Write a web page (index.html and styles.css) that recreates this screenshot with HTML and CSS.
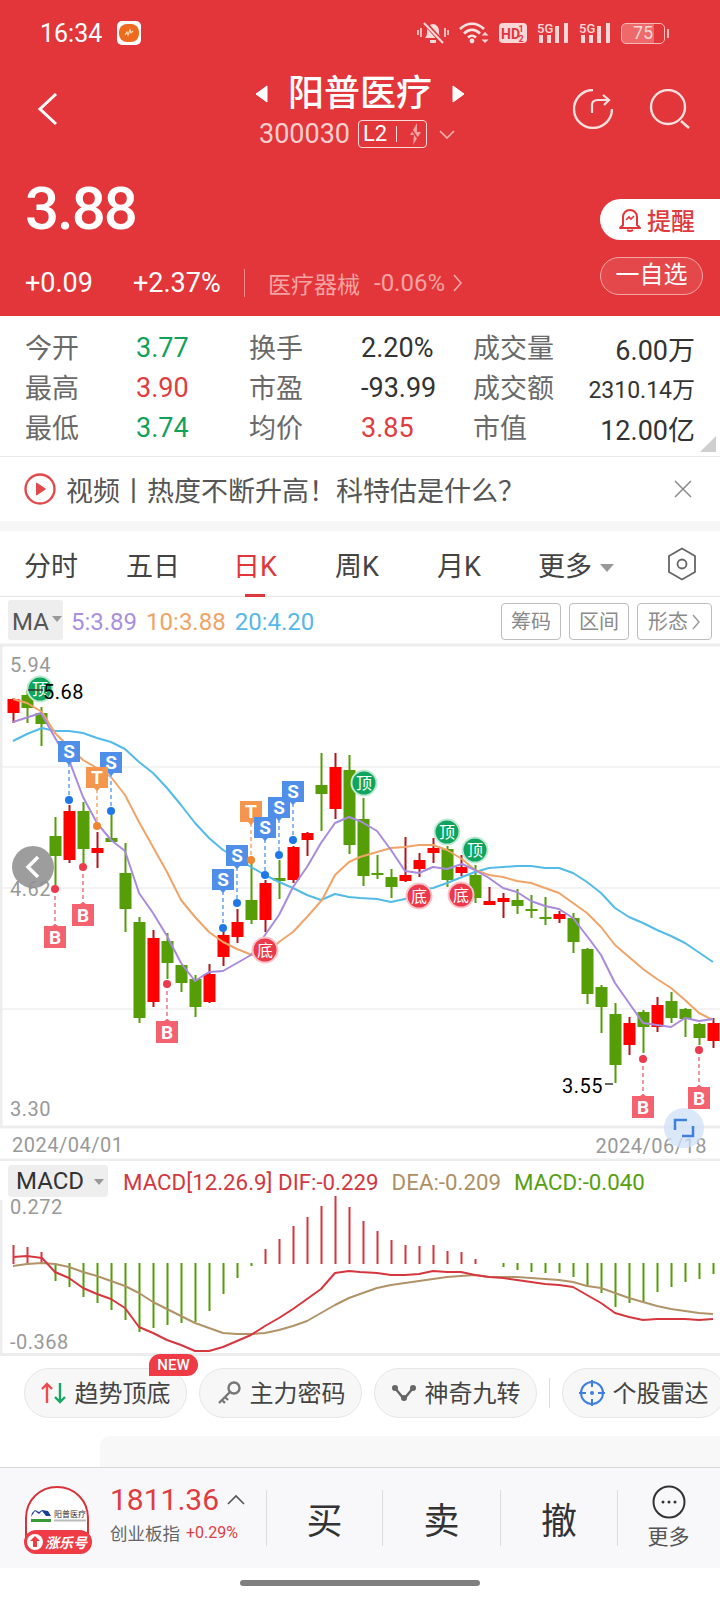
FILE: index.html
```html
<!DOCTYPE html>
<html lang="zh">
<head>
    <meta charset="utf-8">
    <title>阳普医疗</title>
    <link rel="stylesheet" href="styles.css">
</head>
<body>
    <!-- 顶部红色行情区 -->
    <header class="header">
        <div class="status">
            <span class="clock">16:34</span>
            <svg class="app-dot" viewBox="0 0 24 24" width="24" height="24"><rect width="24" height="24" rx="5" fill="#fff"/><rect x="2" y="3" width="20" height="18" rx="8" fill="#EE6A1F"/><path d="M8 14l2-3 1 3 2-5 1 3 2-2" fill="none" stroke="#FFD9B0" stroke-width="1.2"/></svg>
            <div class="status-icons">
                <svg width="32" height="22" viewBox="0 0 32 22"><path d="M8 16c2-2 2-4 2-7 0-4 3-7 6-7s6 3 6 7c0 3 0 5 2 7z" fill="#FBDADA"/><path d="M13 18h6v3h-6z" fill="#FBDADA"/><path d="M8 1l18 20" stroke="#E3363A" stroke-width="4.500"/><path d="M7 1l19 20" stroke="#FBDADA" stroke-width="2"/><path d="M1 8v5M4 6v9M28 6v9M31 8v5" stroke="#FBDADA" stroke-width="1.600"/></svg>
                <svg width="30" height="22" viewBox="0 0 30 22"><path d="M1 7c7-7 17-7 24 0M5 11.500c5-5 11-5 16 0M9 15.500c3-2.600 5-2.600 8 0" fill="none" stroke="#FBE4E4" stroke-width="2.600"/><circle cx="13" cy="19" r="2.400" fill="#FBE4E4"/><path d="M26 10l3.500 3.500h-7zM26 21l3.500-3.500h-7z" fill="#FBDADA"/></svg>
                <svg width="28" height="20" viewBox="0 0 28 20"><rect width="28" height="20" rx="4" fill="#FBD7D7"/><text x="2" y="15.500" class="hd">HD</text><text x="19.500" y="9" class="hd-small">1</text><text x="19.500" y="18.500" class="hd-small">2</text></svg>
                <svg width="32" height="22" viewBox="0 0 32 22"><text x="0" y="11" class="five-g">5G</text><path d="M2 13h4v8H2zM10 13h4v8h-4zM18 4h4v17h-4zM27 1h4v20h-4z" fill="#FBD7D7"/></svg>
                <svg width="32" height="22" viewBox="0 0 32 22"><text x="0" y="11" class="five-g">5G</text><path d="M2 13h4v8H2zM10 13h4v8h-4zM18 4h4v17h-4zM27 1h4v20h-4z" fill="#FBD7D7"/></svg>
                <div class="battery"><span>75</span></div>
            </div>
        </div>
        <div class="nav">
            <svg class="back" width="24" height="36" viewBox="0 0 24 36"><path d="M20 3L4 18l16 15" fill="none" stroke="#fff" stroke-width="3"/></svg>
            <div class="nav-center">
                <div class="title-row">
                    <svg width="13" height="18" viewBox="0 0 13 18"><path d="M12 1v16L1 9z" fill="#fff" stroke="#fff" stroke-linejoin="round"/></svg>
                    <span class="title">阳普医疗</span>
                    <svg width="13" height="18" viewBox="0 0 13 18"><path d="M1 1v16l11-8z" fill="#fff" stroke="#fff" stroke-linejoin="round"/></svg>
                </div>
                <div class="code-row">
                    <span class="code">300030</span>
                    <div class="level-box">
                        <span class="level">L2</span>
                        <i class="level-line"></i>
                        <svg width="16" height="24" viewBox="0 0 16 24"><path d="M10 1L3 13h4l-1 10 8-13h-4z" fill="#F2A0A0"/><path d="M2 4l12 17" stroke="#E3363A" stroke-width="1.500"/></svg>
                    </div>
                    <svg width="16" height="9" viewBox="0 0 16 9"><path d="M1 1l7 7 7-7" fill="none" stroke="#F5B4B4" stroke-width="1.600"/></svg>
                </div>
            </div>
            <div class="nav-tools">
                <svg width="40" height="40" viewBox="0 0 40 40"><path d="M20 1A19 19 0 1 0 39 20" fill="none" stroke="#FBE0E0" stroke-width="2.400"/><path d="M19 24v-8q0-5 6-5h11M30 6l6 5-5 5" fill="none" stroke="#FBE0E0" stroke-width="2.200"/></svg>
                <svg width="42" height="42" viewBox="0 0 42 42"><circle cx="19" cy="18" r="17" fill="none" stroke="#FBE0E0" stroke-width="2.400"/><path d="M32 32l8 7" stroke="#FBE0E0" stroke-width="2.400"/></svg>
            </div>
        </div>
        <div class="quote">
            <div class="quote-left">
                <div class="price">3.88</div>
                <div class="changes">
                    <span class="chg-a">+0.09</span>
                    <span class="chg-b">+2.37%</span>
                    <i class="chg-line"></i>
                    <span class="sector">医疗器械</span>
                    <span class="sector-pct">-0.06%</span>
                    <svg width="10" height="18" viewBox="0 0 10 18"><path d="M1 1l7 8-7 8" fill="none" stroke="#F5A9A9" stroke-width="1.600"/></svg>
                </div>
            </div>
            <div class="quote-right">
                <div class="remind">
                    <svg width="24" height="26" viewBox="0 0 24 26"><path d="M5 18V10a7 7 0 0 1 14 0v8l3 3H2z" fill="none" stroke="#E3363A" stroke-width="2" stroke-linejoin="round"/><path d="M9 23q3 2 6 0" fill="none" stroke="#E3363A" stroke-width="2"/><path d="M8 13l3-3 2 2 3-3" fill="none" stroke="#E3363A" stroke-width="1.600"/></svg>
                    <span>提醒</span>
                </div>
                <div class="add-fav">一自选</div>
            </div>
        </div>
    </header>

    <!-- 盘口数据 -->
    <section class="stats">
        <span class="lab">今开</span><span class="val green">3.77</span>
        <span class="lab">换手</span><span class="val">2.20%</span>
        <span class="lab">成交量</span><span class="val right">6.00万</span>
        <span class="lab">最高</span><span class="val red">3.90</span>
        <span class="lab">市盈</span><span class="val">-93.99</span>
        <span class="lab">成交额</span><span class="val right small">2310.14万</span>
        <span class="lab">最低</span><span class="val green">3.74</span>
        <span class="lab">均价</span><span class="val red">3.85</span>
        <span class="lab">市值</span><span class="val right">12.00亿</span>
        <i class="corner"></i>
    </section>

    <div class="news">
        <svg width="32" height="32" viewBox="0 0 32 32"><circle cx="16" cy="16" r="14.500" fill="none" stroke="#E3484C" stroke-width="2.400"/><path d="M12.500 10l9 6-9 6z" fill="#E3484C" stroke="#E3484C" stroke-linejoin="round"/></svg>
        <span class="news-text">视频丨热度不断升高！科特估是什么？</span>
        <svg class="news-close" width="18" height="18" viewBox="0 0 18 18"><path d="M1 1l16 16M17 1L1 17" stroke="#8a8a8a" stroke-width="1.500"/></svg>
    </div>
    <div class="gap"></div>

    <nav class="tabs">
        <span class="tab">分时</span>
        <span class="tab">五日</span>
        <span class="tab active">日K</span>
        <span class="tab">周K</span>
        <span class="tab">月K</span>
        <span class="tab more">更多<i class="tri"></i></span>
        <svg class="tab-set" width="30" height="34" viewBox="0 0 30 34"><path d="M15 1.500l13 7.500v16l-13 7.500L2 25V9z" fill="none" stroke="#666" stroke-width="1.800"/><circle cx="15" cy="17" r="4.500" fill="none" stroke="#666" stroke-width="1.800"/></svg>
    </nav>

    <div class="ma-row">
        <span class="ma-btn">MA<i class="tri tiny"></i></span>
        <span class="ma5">5:3.89</span>
        <span class="ma10">10:3.88</span>
        <span class="ma20">20:4.20</span>
        <div class="ma-tools">
            <span class="tool">筹码</span>
            <span class="tool">区间</span>
            <span class="tool wide">形态<svg width="9" height="16" viewBox="0 0 9 16"><path d="M1 1l6 7-6 7" fill="none" stroke="#999" stroke-width="1.400"/></svg></span>
        </div>
    </div>

    <!-- K线图，坐标直接用页面像素 -->
    <svg id="kline" class="chart" width="720" height="520" viewBox="0 641 720 520">
        <path class="frame" d="M0 645H720M1 645V1127M0 1127H720M0 1160H720"/>
        <path class="grid" d="M2 767H720M2 888H720M2 1009H720"/>
        <text class="axis" x="10" y="672">5.94</text>
        <text class="axis" x="10" y="896">4.62</text>
        <text class="axis" x="10" y="1116">3.30</text>
        <text class="axis" x="12" y="1152">2024/04/01</text>
        <text class="axis" x="707" y="1153" text-anchor="end">2024/06/18</text>
        <g id="kline-body"></g>
    </svg>

    <div class="macd-head">
        <span class="macd-btn">MACD<i class="tri tiny"></i></span>
        <span class="leg-dif">MACD[12.26.9] DIF:-0.229</span>
        <span class="leg-dea">DEA:-0.209</span>
        <span class="leg-macd">MACD:-0.040</span>
    </div>
    <svg id="macd" class="chart" width="720" height="163" viewBox="0 1193 720 163">
        <path class="frame" d="M0 1354.500H720M1 1200V1354"/>
        <text class="axis" x="10" y="1214">0.272</text>
        <text class="axis" x="10" y="1349">-0.368</text>
        <g id="macd-body"></g>
    </svg>

    <div class="chips">
        <div class="chip has-new">
            <svg width="26" height="22" viewBox="0 0 26 22"><path d="M6 21V2M1 7l5-5 5 5" fill="none" stroke="#EE4A50" stroke-width="2.400"/><path d="M19 1v19M14 15l5 5 5-5" fill="none" stroke="#16A765" stroke-width="2.400"/></svg>
            <span>趋势顶底</span>
            <b class="new-tag">NEW</b>
        </div>
        <div class="chip">
            <svg width="26" height="24" viewBox="0 0 26 24"><circle cx="18" cy="7" r="5.500" fill="none" stroke="#777" stroke-width="2.400"/><path d="M14 11L3 22M6 19l3 3M9 16l3 3" fill="none" stroke="#777" stroke-width="2.400"/></svg>
            <span>主力密码</span>
        </div>
        <div class="chip">
            <svg width="26" height="18" viewBox="0 0 26 18"><path d="M4 4l9 11 9-11" fill="none" stroke="#666" stroke-width="2.400"/><circle cx="4" cy="4" r="3" fill="#666"/><circle cx="22" cy="4" r="3" fill="#666"/><circle cx="13" cy="14" r="3" fill="#666"/></svg>
            <span>神奇九转</span>
        </div>
        <i class="chip-line"></i>
        <div class="chip">
            <svg width="26" height="26" viewBox="0 0 26 26"><circle cx="13" cy="13" r="11" fill="none" stroke="#3F7FE0" stroke-width="2"/><path d="M13 0v7M13 19v7M0 13h7M19 13h7" stroke="#3F7FE0" stroke-width="2"/><circle cx="13" cy="13" r="2" fill="#3F7FE0"/></svg>
            <span>个股雷达</span>
        </div>
    </div>

    <div class="peek"></div>

    <!-- 底部交易栏 -->
    <footer class="trade-bar">
        <div class="index-cell">
            <div class="logo">
                <svg width="68" height="68" viewBox="0 0 68 68">
                    <path d="M2 50V32C2 14 16 1 33 1s31 13 31 31v18z" fill="#fff" stroke="#D8333B" stroke-width="2"/>
                    <path d="M7 31l4-6 4 3 3-3 4 5h5l-3-5-6-1-3 2-4-2-3 3z" fill="#1B3F96"/>
                    <rect x="7" y="33" width="20" height="3" fill="#3A9A3A"/>
                    <text x="30" y="31" class="logo-name">阳普医疗</text>
                    <rect x="30" y="33.500" width="32" height="2" fill="#bbb"/>
                    <rect x="0" y="44" width="68" height="24" rx="12" fill="#EF3B45"/>
                    <circle cx="11" cy="56" r="8" fill="#fff"/>
                    <path d="M11 50l5 5h-3v6H9v-6H6z" fill="#EF3B45"/>
                    <text x="21" y="62" class="logo-pill">涨乐号</text>
                </svg>
            </div>
            <div class="index-text">
                <div class="index-top"><span class="index-num">1811.36</span><svg width="18" height="11" viewBox="0 0 18 11"><path d="M1 10l8-8 8 8" fill="none" stroke="#555" stroke-width="1.600"/></svg></div>
                <div class="index-sub"><span>创业板指</span><b>+0.29%</b></div>
            </div>
        </div>
        <div class="act"><span>买</span></div>
        <div class="act"><span>卖</span></div>
        <div class="act"><span>撤</span></div>
        <div class="act act-more">
            <svg width="34" height="34" viewBox="0 0 34 34"><circle cx="17" cy="17" r="15.500" fill="none" stroke="#333" stroke-width="2"/><circle cx="11" cy="17" r="1.500" fill="#333"/><circle cx="17" cy="17" r="1.500" fill="#333"/><circle cx="23" cy="17" r="1.500" fill="#333"/></svg>
            <span>更多</span>
        </div>
    </footer>

    <div class="home"><i></i></div>

    <script src="chart.js"></script>
</body>
</html>
```

FILE: styles.css
```css
* {
    box-sizing: border-box;
}
html, body {
    margin: 0;
    padding: 0;
    background: #fff;
}
body {
    width: 720px;
    height: 1600px;
    overflow: hidden;
    font-family: Roboto, "Noto Sans CJK SC", sans-serif;
    color: #333;
}
i {
    font-style: normal;
}

/* 顶部红色区域 */
.header {
    height: 316px;
    background: #E3363A;
    color: #fff;
}
.status {
    height: 66px;
    display: flex;
    align-items: center;
    padding: 0 0 0 40px;
}
.clock {
    font-size: 25px;
    width: 77px;
    color: #fff;
}
.app-dot {
    flex: none;
}
.status-icons {
    margin-left: auto;
    margin-right: 55px;
    display: flex;
    align-items: center;
    gap: 10px;
}
.hd {
    font: 700 14px Roboto, sans-serif;
    fill: #E3363A;
}
.hd-small {
    font: 700 9px Roboto, sans-serif;
    fill: #E3363A;
}
.five-g {
    font: 500 13px Roboto, sans-serif;
    fill: #FBD7D7;
}
.battery {
    width: 44px;
    height: 21px;
    border: 1.500px solid #F5B9B9;
    border-radius: 5px;
    text-align: center;
    font-size: 18px;
    line-height: 18px;
    color: #FBD7D7;
    position: relative;
    background: linear-gradient(90deg, #EE6A6A 75%, transparent 75%);
}
.battery::after {
    content: "";
    position: absolute;
    right: -5px;
    top: 5px;
    width: 2px;
    height: 9px;
    background: #F5B9B9;
}

.nav {
    height: 94px;
    position: relative;
    display: flex;
    justify-content: center;
}
.back {
    position: absolute;
    left: 36px;
    top: 25px;
}
.nav-center {
    display: flex;
    flex-direction: column;
    align-items: center;
}
.title-row {
    height: 48px;
    margin-top: 4px;
    display: flex;
    align-items: center;
    gap: 20px;
}
.title {
    font-size: 36px;
    font-weight: 500;
    line-height: 48px;
}
.code-row {
    display: flex;
    align-items: center;
    height: 32px;
    margin-right: 6px;
}
.code {
    font-size: 27px;
    color: #F9CFCF;
    margin-right: 8px;
}
.level-box {
    width: 69px;
    height: 28px;
    border: 1px solid #FBDADA;
    border-radius: 4px;
    display: flex;
    align-items: center;
    padding-left: 4px;
    margin-right: 12px;
}
.level {
    font-size: 22px;
    line-height: 26px;
    color: #fff;
}
.level-line {
    width: 1px;
    height: 16px;
    background: #FBDADA;
    margin: 0 10px 0 9px;
}
.nav-tools {
    position: absolute;
    right: 29px;
    top: 23px;
    display: flex;
    gap: 36px;
}

.quote {
    height: 156px;
    display: flex;
    justify-content: space-between;
}
.quote-left {
    padding-left: 25px;
}
.price {
    height: 108px;
    padding-top: 11px;
    font-size: 60px;
    line-height: 76px;
    font-weight: 500;
    letter-spacing: -2px;
}
.changes {
    display: flex;
    align-items: center;
    height: 30px;
}
.chg-a, .chg-b {
    font-size: 27px;
    line-height: 30px;
}
.chg-a {
    width: 108px;
}
.chg-b {
    width: 111px;
}
.chg-line {
    width: 1px;
    height: 28px;
    background: #F08A8A;
    margin-right: 23px;
}
.sector {
    font-size: 23px;
    color: #F5A3A3;
    margin-right: 14px;
}
.sector-pct {
    font-size: 24px;
    color: #F5A3A3;
    margin-right: 8px;
}
.quote-right {
    width: 120px;
    padding-top: 39px;
}
.remind {
    height: 41px;
    background: #fff;
    border-radius: 21px 0 0 21px;
    display: flex;
    align-items: center;
    padding-left: 18px;
    gap: 5px;
    color: #DE3B3F;
    font-size: 24px;
    font-weight: 500;
}
.add-fav {
    width: 103px;
    height: 38px;
    margin-top: 17px;
    border: 1.500px solid #F1A6A6;
    border-radius: 19px;
    background: rgba(255, 255, 255, .09);
    text-align: center;
    font-size: 24px;
    line-height: 34px;
}

/* 盘口 */
.stats {
    position: relative;
    height: 141px;
    padding: 11px 25px 0;
    display: grid;
    grid-template-columns: 111px 113px 112px 112px 100px 122px;
    grid-auto-rows: 40px;
    align-items: center;
    border-bottom: 1px solid #E8E8E8;
    font-size: 27px;
}
.lab {
    color: #6A6A6A;
    padding-bottom: 2px;
}
.val {
    color: #333;
    padding-top: 2px;
}
.green {
    color: #12A15B;
}
.red {
    color: #E13C3F;
}
.right {
    text-align: right;
}
.small {
    font-size: 23px;
}
.corner {
    position: absolute;
    right: 4px;
    bottom: 4px;
    width: 16px;
    height: 16px;
    background: #CFCFCF;
    clip-path: polygon(100% 0, 100% 100%, 0 100%);
}

.news {
    height: 64px;
    display: flex;
    align-items: center;
    padding-left: 24px;
    gap: 10px;
}
.news-text {
    font-size: 27px;
    color: #555;
    white-space: nowrap;
}
.news-close {
    margin-left: auto;
    margin-right: 28px;
}
.gap {
    height: 10px;
    background: #F6F6F6;
}

.tabs {
    position: relative;
    height: 66px;
    display: grid;
    grid-template-columns: repeat(5, 102px) 1fr;
    align-items: center;
    border-bottom: 1px solid #E6E6E6;
    font-size: 27px;
    color: #444;
}
.tab {
    position: relative;
    height: 66px;
    padding-top: 6px;
    text-align: center;
    line-height: 60px;
}
.tab.active {
    color: #E3363A;
}
.tab.active::after {
    content: "";
    position: absolute;
    left: 41px;
    bottom: 0;
    width: 20px;
    height: 3px;
    background: #E3363A;
}
.tab.more {
    text-align: left;
    padding-left: 28px;
}
.tri {
    display: inline-block;
    width: 0;
    height: 0;
    margin-left: 8px;
    border-left: 7px solid transparent;
    border-right: 7px solid transparent;
    border-top: 8px solid #999;
    vertical-align: 4px;
}
.tri.tiny {
    margin-left: 3px;
    border-left-width: 5px;
    border-right-width: 5px;
    border-top-width: 6px;
    vertical-align: 8px;
}
.tab-set {
    position: absolute;
    left: 667px;
    top: 16px;
}

.ma-row {
    height: 44px;
    padding: 3px 8px 0;
    display: flex;
    align-items: flex-start;
    font-size: 24px;
}
.ma-btn {
    width: 55px;
    height: 40px;
    background: #EEE;
    border-radius: 3px;
    padding-left: 4px;
    font-size: 24px;
    line-height: 44px;
    color: #555;
    margin-right: 8px;
    white-space: nowrap;
}
.ma5, .ma10, .ma20 {
    line-height: 44px;
    margin-right: 9px;
}
.ma5 {
    color: #A98FE0;
}
.ma10 {
    color: #EFA465;
}
.ma20 {
    color: #55B8E8;
}
.ma-tools {
    margin-left: auto;
    display: flex;
    gap: 8px;
    padding-top: 3px;
}
.tool {
    width: 60px;
    height: 37px;
    border: 1px solid #BDBDBD;
    border-radius: 4px;
    text-align: center;
    font-size: 20px;
    line-height: 36px;
    color: #8A8A8A;
}
.tool.wide {
    width: 75px;
    display: flex;
    justify-content: center;
    align-items: center;
    gap: 4px;
}

/* 图表 */
.chart {
    display: block;
}
.frame {
    fill: none;
    stroke: #EDEDED;
    stroke-width: 3;
}
.grid {
    fill: none;
    stroke: #F3F3F3;
    stroke-width: 2;
}
.axis {
    font-size: 20px;
    letter-spacing: .5px;
    fill: #999;
}
.mark-price {
    font-size: 20px;
    letter-spacing: .5px;
    fill: #000;
}
.pin-text {
    font-size: 19px;
    font-weight: 700;
    fill: #fff;
    text-anchor: middle;
}
.badge-text {
    font-size: 16px;
    fill: #fff;
    text-anchor: middle;
}

.macd-head {
    height: 32px;
    padding: 4px 8px 0;
    display: flex;
    align-items: flex-start;
    font-size: 22.300px;
    line-height: 34px;
    white-space: nowrap;
}
.macd-btn {
    width: 100px;
    height: 32px;
    background: #EEE;
    border-radius: 4px;
    padding-left: 8px;
    font-size: 24px;
    line-height: 32px;
    color: #333;
    margin-right: 15px;
}
.macd-btn .tri {
    margin-left: 10px;
    vertical-align: 4px;
}
.leg-dif {
    color: #D2383F;
    margin-right: 13px;
}
.leg-dea {
    color: #AE9066;
    margin-right: 13px;
}
.leg-macd {
    color: #55A010;
}

/* 功能入口 */
.chips {
    height: 80px;
    padding: 12px 0 0 24px;
    display: flex;
    align-items: flex-start;
    gap: 12px;
    white-space: nowrap;
}
.chip {
    position: relative;
    flex: none;
    width: 163px;
    height: 50px;
    background: #F7F7F7;
    border: 1px solid #E6E6E6;
    border-radius: 25px;
    display: flex;
    align-items: center;
    justify-content: center;
    gap: 8px;
    font-size: 24px;
    color: #444;
}
.chip span {
    padding-bottom: 4px;
}
.chip-line {
    flex: none;
    width: 1px;
    height: 30px;
    margin-top: 10px;
    background: #DDD;
}
.new-tag {
    position: absolute;
    left: 124px;
    top: -15px;
    width: 49px;
    height: 22px;
    background: #EF3B45;
    border-radius: 11px 11px 11px 0;
    color: #fff;
    font-size: 15px;
    font-weight: 500;
    line-height: 22px;
    text-align: center;
}
.peek {
    height: 31px;
    margin-left: 100px;
    background: #F8F8F8;
    border-radius: 10px 0 0 0;
}

/* 底部交易栏 */
.trade-bar {
    height: 101px;
    background: #F8F8FB;
    border-top: 1px solid #D8D8D8;
    display: grid;
    grid-template-columns: 266px 116px 118px 117px 103px;
    align-items: center;
}
.index-cell {
    display: flex;
    align-items: center;
    padding-left: 24px;
}
.logo {
    width: 86px;
    height: 68px;
    flex: none;
    margin-top: 4px;
}
.logo-name {
    font-size: 8px;
    fill: #333;
}
.logo-pill {
    font-size: 14px;
    font-weight: 700;
    font-style: italic;
    fill: #fff;
}
.index-text {
    margin-top: -12px;
}
.index-top {
    display: flex;
    align-items: center;
    gap: 8px;
    height: 40px;
}
.index-num {
    font-size: 30px;
    color: #E13C3F;
}
.index-sub {
    display: flex;
    align-items: center;
    gap: 6px;
    font-size: 17.500px;
    color: #666;
    white-space: nowrap;
}
.index-sub b {
    font-size: 16px;
    font-weight: 400;
    color: #E13C3F;
}
.act {
    height: 56px;
    border-left: 1px solid #DCDCDC;
    display: flex;
    align-items: center;
    justify-content: center;
    font-size: 36px;
    color: #333;
}
.act-more {
    height: 72px;
    border-left: 0;
    flex-direction: column;
    gap: 4px;
    font-size: 21px;
    color: #555;
    position: relative;
}
.act-more::before {
    content: "";
    position: absolute;
    left: 0;
    top: 8px;
    height: 56px;
    border-left: 1px solid #DCDCDC;
}
.act-more span {
    line-height: 28px;
}

.home {
    height: 32px;
    padding-top: 12px;
    display: flex;
    justify-content: center;
}
.home i {
    width: 240px;
    height: 6px;
    border-radius: 3px;
    background: #7F7F7F;
}
```

FILE: chart.js
```js
// K线数据：颜色、最高、实体上沿、实体下沿、最低（页面像素）
const candles = [
    ['r',698,699,713,723],['g',690,695,708,723],['g',707,713,724,746],['g',817,836,856,885],
    ['r',805,811,860,863],['g',802,811,849,863],['r',832,848,853,868],['g',815,838,842,842],
    ['g',843,873,909,932],['g',917,922,1018,1023],['r',930,938,1002,1007],['g',933,941,963,979],
    ['g',965,965,983,992],['g',975,979,1007,1017],['r',964,974,1002,1003],['r',930,935,957,966],
    ['r',909,922,937,943],['g',863,900,920,924],['r',880,883,920,932],['g',860,878,881,899],
    ['r',846,847,880,883],['r',832,833,840,856],['g',753,785,794,831],['r',753,767,809,819],
    ['g',755,770,845,854],['g',798,819,876,886],['g',855,873,875,879],['g',869,877,887,898],
    ['r',837,875,881,882],['r',853,860,869,877],['r',838,848,853,863],['g',846,849,880,887],
    ['r',855,867,873,876],['g',865,875,898,903],['r',887,901,905,905],['r',893,898,902,918],
    ['g',889,900,906,914],['g',895,909,911,918],['g',897,917,919,925],['r',911,914,919,923],
    ['g',913,918,942,953],['g',948,949,994,1004],['g',985,987,1007,1033],['g',1003,1014,1065,1083],
    ['r',1017,1023,1045,1055],['g',1010,1012,1027,1053],['r',997,1005,1027,1032],['g',992,1001,1018,1023],
    ['g',1008,1009,1019,1037],['g',1023,1024,1038,1045],['r',1018,1023,1041,1048]
];

const ma5 = '13,722 41,713 58,743 69,760 83,797 97,823 111,840 125,851 139,893 153,913 167,936 181,963 195,981 209,972 223,971 237,963 251,955 265,935 279,915 293,887 307,867 321,843 335,823 349,817 360,821 377,831 391,850 405,871 419,873 433,867 447,869 462,864 475,870 489,878 503,888 517,892 531,901 545,906 559,909 573,918 590,940 601,955 615,983 629,1003 643,1023 657,1025 671,1027 685,1018 699,1021 713,1019';
const ma10 = '13,699 27,703 42,712 55,733 69,747 83,760 97,768 111,777 125,795 139,822 153,847 167,872 181,900 195,917 209,932 223,942 237,949 252,955 265,955 279,942 293,932 307,917 322,900 335,875 349,862 360,857 377,852 391,848 405,847 419,845 433,845 447,850 462,859 475,870 489,875 503,877 517,881 531,883 545,888 559,893 573,903 587,913 601,927 615,945 629,957 643,969 657,979 671,988 685,1000 699,1013 713,1020';
const ma20 = '13,741 27,734 42,728 55,731 69,731 83,733 97,738 111,742 125,749 139,762 153,773 167,788 181,805 195,823 209,838 223,850 237,858 251,867 265,875 279,882 293,888 307,895 321,900 335,894 349,897 360,898 377,899 391,902 405,899 419,890 433,888 447,883 462,877 475,872 489,868 503,867 517,866 531,866 545,868 559,868 573,873 587,882 601,893 615,908 629,917 643,923 657,930 671,936 685,943 713,962';

// 买卖点：字母、标签左边、标签上沿、圆点y
const pins = [
    ['S',58,741,800],['S',100,752,811],['T',86,767,826],
    ['S',212,869,928],['S',226,845,903],['T',240,801,860],
    ['S',254,817,875],['S',268,797,855],['S',282,781,840],
    ['B',44,926,889],['B',72,904,867],['B',156,1021,984],
    ['B',632,1096,1059],['B',688,1087,1050]
];
const pinColor = {
    S: ['#4F8FEA', '#1F78E8', '#8DB8F2'],
    T: ['#F5964F', '#F2862F', '#F8BE92'],
    B: ['#F4616F', '#EB3A4B', '#F497A0']
};

const badges = [
    ['顶',40,689],['顶',364,783],['顶',447,832],['顶',475,850],
    ['底',419,896],['底',461,895],['底',265,950]
];

// MACD柱：正值向上、负值向下，数值为柱端的y
const macdBars = [1245,1247,1252,1281,1287,1297,1303,1310,1320,1332,1328,1325,1323,1322,1311,1294,1278,1266,1249,1239,1226,1217,1206,1196,1207,1221,1231,1240,1245,1246,1245,1251,1252,1259,0,1267,1270,1272,1273,1273,1277,1287,1293,1307,1303,1302,1292,1287,1282,1279,1274];
const dif = '13,1257 27,1256 42,1258 55,1272 69,1278 83,1288 97,1294 111,1299 125,1308 139,1327 153,1333 167,1340 181,1345 195,1351 209,1351 223,1347 237,1341 251,1335 265,1326 279,1318 293,1309 307,1299 321,1289 335,1273 349,1271 360,1272 377,1273 391,1275 405,1275 419,1274 433,1271 447,1272 461,1272 475,1275 489,1277 503,1278 517,1280 531,1282 545,1284 559,1285 573,1287 587,1295 601,1303 615,1313 629,1317 643,1320 657,1319 671,1319 685,1319 699,1320 713,1319';
const dea = '13,1266 27,1264 42,1263 55,1264 69,1267 83,1272 97,1276 111,1281 125,1286 139,1293 153,1302 167,1309 181,1316 195,1323 209,1328 223,1333 237,1334 251,1334 265,1333 279,1330 293,1326 307,1321 321,1313 335,1305 349,1298 360,1294 377,1288 391,1285 405,1283 419,1281 433,1279 447,1277 461,1276 475,1275 489,1277 503,1277 517,1277 531,1278 545,1279 559,1280 573,1282 587,1286 601,1288 615,1293 629,1298 643,1302 657,1306 671,1309 685,1311 699,1313 713,1314';

function candleX(i) {
    return 13.5 + 14 * i;
}

function line(points, color) {
    return `<polyline points="${points}" fill="none" stroke="${color}" stroke-width="2" stroke-linejoin="round"/>`;
}

function drawCandles() {
    return candles.map((c, i) => {
        const x = candleX(i);
        const body = c[0] === 'r' ? '#FF0000' : '#559E08';
        const wick = c[0] === 'r' ? '#B3161C' : '#559E08';
        return `<rect x="${x - 1}" y="${c[1]}" width="2" height="${c[4] - c[1]}" fill="${wick}"/>` +
            `<rect x="${x - 6}" y="${c[2]}" width="12" height="${c[3] - c[2]}" fill="${body}"/>`;
    }).join('');
}

function drawPin(p) {
    const [letter, x, y, dotY] = p;
    const [fill, dot, dash] = pinColor[letter];
    const cx = x + 11;
    if (letter === 'B') {
        return `<line x1="${cx}" y1="${dotY}" x2="${cx}" y2="${y}" stroke="${dash}" stroke-width="2" stroke-dasharray="4 3"/>` +
            `<circle cx="${cx}" cy="${dotY}" r="4" fill="${dot}"/>` +
            `<path d="M${x} ${y}h8l3-2 3 2h8v22h-22z" fill="${fill}"/>` +
            `<text class="pin-text" x="${cx}" y="${y + 18}">B</text>`;
    }
    return `<line x1="${cx}" y1="${y + 22}" x2="${cx}" y2="${dotY}" stroke="${dash}" stroke-width="2" stroke-dasharray="4 3"/>` +
        `<circle cx="${cx}" cy="${dotY}" r="4" fill="${dot}"/>` +
        `<path d="M${x} ${y}h22v21h-8l-3 3-3-3h-8z" fill="${fill}"/>` +
        `<text class="pin-text" x="${cx}" y="${y + 17}">${letter}</text>`;
}

function drawBadge(b) {
    const fill = b[0] === '顶' ? '#0FA55E' : '#EC3A4B';
    const halo = b[0] === '顶' ? '#BFE9D3' : '#F9C3CA';
    return `<circle cx="${b[1]}" cy="${b[2]}" r="12.500" fill="${fill}" stroke="${halo}" stroke-width="2"/>` +
        `<text class="badge-text" x="${b[1]}" y="${b[2] + 6}">${b[0]}</text>`;
}

function drawKline() {
    let html = drawCandles();
    html += line(ma20, '#53BBE8') + line(ma10, '#F0A468') + line(ma5, '#A98BDC');
    html += pins.map(drawPin).join('');
    html += badges.map(drawBadge).join('');
    // 最高最低价标注
    html += '<line x1="28" y1="690" x2="43" y2="690" stroke="#333" stroke-width="1.500"/>';
    html += '<text class="mark-price" x="43" y="699">5.68</text>';
    html += '<line x1="605" y1="1084" x2="613" y2="1084" stroke="#333" stroke-width="1.500"/>';
    html += '<text class="mark-price" x="562" y="1093">3.55</text>';
    // 左侧滚动按钮和右下全屏按钮
    html += '<circle cx="33" cy="867" r="21" fill="#8f8f8f" opacity=".88"/>';
    html += '<path d="M38 857l-10 10 10 10" fill="none" stroke="#fff" stroke-width="3.500"/>';
    html += '<circle cx="684" cy="1128" r="20" fill="#CFE0F8" opacity=".75"/>';
    html += '<path d="M675 1130v-10h12M693 1126v10h-11" fill="none" stroke="#3F80DC" stroke-width="2.500"/>';
    document.getElementById('kline-body').innerHTML = html;
}

function drawMacd() {
    let html = '';
    macdBars.forEach((y, i) => {
        if (!y) return;
        const x = candleX(i) - 1;
        if (y < 1264) {
            html += `<rect x="${x}" y="${y}" width="2" height="${1264 - y}" fill="#D6373F"/>`;
        } else {
            html += `<rect x="${x}" y="1263" width="2" height="${y - 1263}" fill="#559E08"/>`;
        }
    });
    html += line(dea, '#B09468') + line(dif, '#D6373F');
    document.getElementById('macd-body').innerHTML = html;
}

drawKline();
drawMacd();
```
